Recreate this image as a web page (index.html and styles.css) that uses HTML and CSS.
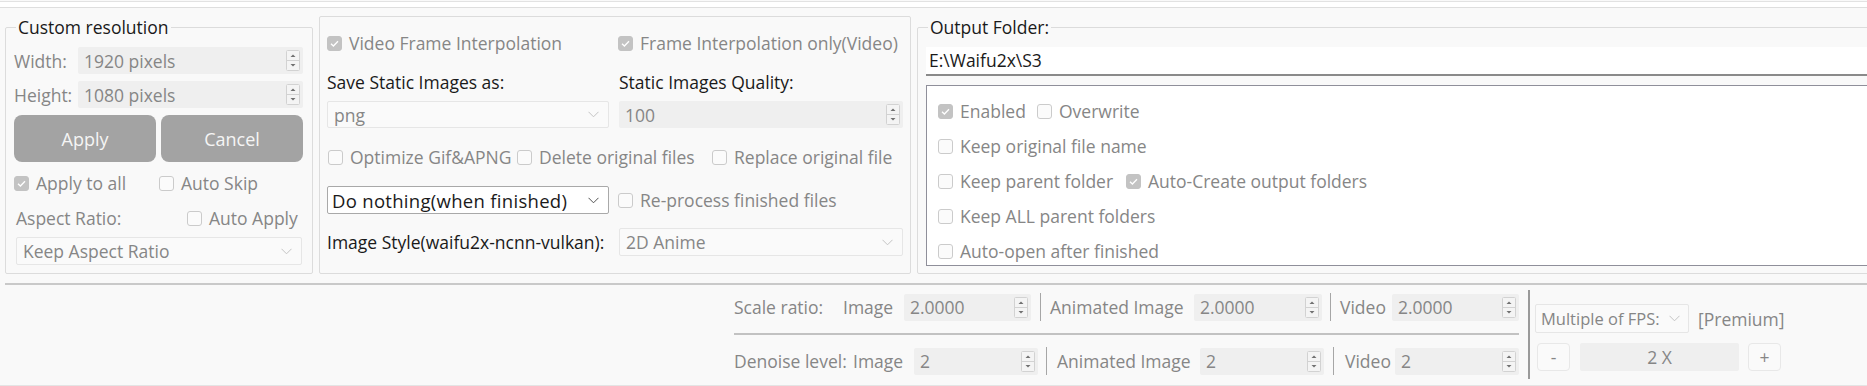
FILE: index.html
```html
<!DOCTYPE html>
<html>
<head>
<meta charset="utf-8">
<link rel="stylesheet" href="styles.css">
</head>
<body>
<div class="topbar"></div>
<div class="top-row">
  <div class="group group-res">
    <div class="group-title">Custom resolution</div>
    <div class="field-row r-width">
      <span class="lbl lbl-dim">Width:</span>
      <div class="spin spin-res"><span class="val">1920 pixels</span><svg class="arrows" width="14" height="21" viewBox="0 0 14 21"><rect x="0.5" y="0.5" width="13" height="20" rx="1" fill="#f4f4f4" stroke="#d2d2d2"/><line x1="1" y1="10.5" x2="13" y2="10.5" stroke="#d2d2d2"/><path d="M4.5 7 L7 4.5 L9.5 7 Z" fill="#707070"/><path d="M4.5 14 L7 16.5 L9.5 14 Z" fill="#707070"/></svg></div>
    </div>
    <div class="field-row r-height">
      <span class="lbl lbl-dim">Height:</span>
      <div class="spin spin-res"><span class="val">1080 pixels</span><svg class="arrows" width="14" height="21" viewBox="0 0 14 21"><rect x="0.5" y="0.5" width="13" height="20" rx="1" fill="#f4f4f4" stroke="#d2d2d2"/><line x1="1" y1="10.5" x2="13" y2="10.5" stroke="#d2d2d2"/><path d="M4.5 7 L7 4.5 L9.5 7 Z" fill="#707070"/><path d="M4.5 14 L7 16.5 L9.5 14 Z" fill="#707070"/></svg></div>
    </div>
    <div class="btn-row">
      <div class="btn-big">Apply</div>
      <div class="btn-big">Cancel</div>
    </div>
    <div class="chk-row r-apply">
      <label class="chk w-applyall"><span class="box checked"><svg width="15" height="15" viewBox="0 0 15 15"><path d="M4 7.8 L6.4 10 L11 5.2" fill="none" stroke="#ffffff" stroke-width="1.3"/></svg></span>Apply to all</label>
      <label class="chk"><span class="box"></span>Auto Skip</label>
    </div>
    <div class="chk-row r-aspect">
      <span class="lbl-dim lbl-aspect">Aspect Ratio:</span>
      <label class="chk"><span class="box"></span>Auto Apply</label>
    </div>
    <div class="combo combo-dim combo-aspect"><span>Keep Aspect Ratio</span><svg class="chev" width="11" height="7" viewBox="0 0 11 7"><path d="M0.5 0.8 L5.5 5.8 L10.5 0.8" fill="none" stroke="#c4c4c4" stroke-width="1"/></svg></div>
  </div>

  <div class="group-plain group-mid">
    <div class="mid-grid">
      <label class="chk m-r1"><span class="box checked"><svg width="15" height="15" viewBox="0 0 15 15"><path d="M4 7.8 L6.4 10 L11 5.2" fill="none" stroke="#ffffff" stroke-width="1.3"/></svg></span>Video Frame Interpolation</label>
      <label class="chk m-r1"><span class="box checked"><svg width="15" height="15" viewBox="0 0 15 15"><path d="M4 7.8 L6.4 10 L11 5.2" fill="none" stroke="#ffffff" stroke-width="1.3"/></svg></span>Frame Interpolation only(Video)</label>
      <span class="dark m-r2">Save Static Images as:</span>
      <span class="dark m-r2 col2-text">Static Images Quality:</span>
      <div class="combo combo-dim m-r3"><span>png</span><svg class="chev" width="11" height="7" viewBox="0 0 11 7"><path d="M0.5 0.8 L5.5 5.8 L10.5 0.8" fill="none" stroke="#c4c4c4" stroke-width="1"/></svg></div>
      <div class="spin m-r3 col2-field"><span class="val">100</span><svg class="arrows" width="14" height="21" viewBox="0 0 14 21"><rect x="0.5" y="0.5" width="13" height="20" rx="1" fill="#f4f4f4" stroke="#d2d2d2"/><line x1="1" y1="10.5" x2="13" y2="10.5" stroke="#d2d2d2"/><path d="M4.5 7 L7 4.5 L9.5 7 Z" fill="#707070"/><path d="M4.5 14 L7 16.5 L9.5 14 Z" fill="#707070"/></svg></div>
    </div>
    <div class="chk-row m-r4">
      <label class="chk w-optimize"><span class="box"></span>Optimize Gif&amp;APNG</label>
      <label class="chk w-delete"><span class="box"></span>Delete original files</label>
      <label class="chk"><span class="box"></span>Replace original file</label>
    </div>
    <div class="mid-grid m-r5">
      <div class="combo combo-live"><span>Do nothing(when finished)</span><svg class="chev" width="11" height="7" viewBox="0 0 11 7"><path d="M0.5 0.8 L5.5 5.8 L10.5 0.8" fill="none" stroke="#505050" stroke-width="1"/></svg></div>
      <label class="chk"><span class="box"></span>Re-process finished files</label>
    </div>
    <div class="mid-grid m-r6">
      <span class="dark">Image Style(waifu2x-ncnn-vulkan):</span>
      <div class="combo combo-dim col2-field"><span>2D Anime</span><svg class="chev" width="11" height="7" viewBox="0 0 11 7"><path d="M0.5 0.8 L5.5 5.8 L10.5 0.8" fill="none" stroke="#c4c4c4" stroke-width="1"/></svg></div>
    </div>
  </div>

  <div class="group group-out">
    <div class="group-title">Output Folder:</div>
    <div class="line-edit">E:\Waifu2x\S3</div>
    <div class="list-box">
      <div class="chk-row">
        <label class="chk w-enabled"><span class="box checked"><svg width="15" height="15" viewBox="0 0 15 15"><path d="M4 7.8 L6.4 10 L11 5.2" fill="none" stroke="#ffffff" stroke-width="1.3"/></svg></span>Enabled</label>
        <label class="chk"><span class="box"></span>Overwrite</label>
      </div>
      <div class="chk-row"><label class="chk"><span class="box"></span>Keep original file name</label></div>
      <div class="chk-row">
        <label class="chk w-parent"><span class="box"></span>Keep parent folder</label>
        <label class="chk"><span class="box checked"><svg width="15" height="15" viewBox="0 0 15 15"><path d="M4 7.8 L6.4 10 L11 5.2" fill="none" stroke="#ffffff" stroke-width="1.3"/></svg></span>Auto-Create output folders</label>
      </div>
      <div class="chk-row"><label class="chk"><span class="box"></span>Keep ALL parent folders</label></div>
      <div class="chk-row"><label class="chk"><span class="box"></span>Auto-open after finished</label></div>
    </div>
  </div>
</div>

<div class="separator"></div>

<div class="bottom">
  <div class="ratios">
    <div class="ratio-row">
      <span class="lbl-dim w-scale">Scale ratio:</span>
      <span class="lbl-dim w-img">Image</span>
      <div class="spin sp-a"><span class="val">2.0000</span><svg class="arrows" width="14" height="21" viewBox="0 0 14 21"><rect x="0.5" y="0.5" width="13" height="20" rx="1" fill="#f4f4f4" stroke="#d2d2d2"/><line x1="1" y1="10.5" x2="13" y2="10.5" stroke="#d2d2d2"/><path d="M4.5 7 L7 4.5 L9.5 7 Z" fill="#707070"/><path d="M4.5 14 L7 16.5 L9.5 14 Z" fill="#707070"/></svg></div>
      <span class="vsep"></span>
      <span class="lbl-dim w-anim">Animated Image</span>
      <div class="spin sp-b"><span class="val">2.0000</span><svg class="arrows" width="14" height="21" viewBox="0 0 14 21"><rect x="0.5" y="0.5" width="13" height="20" rx="1" fill="#f4f4f4" stroke="#d2d2d2"/><line x1="1" y1="10.5" x2="13" y2="10.5" stroke="#d2d2d2"/><path d="M4.5 7 L7 4.5 L9.5 7 Z" fill="#707070"/><path d="M4.5 14 L7 16.5 L9.5 14 Z" fill="#707070"/></svg></div>
      <span class="vsep vsep-b"></span>
      <span class="lbl-dim w-video">Video</span>
      <div class="spin sp-c"><span class="val">2.0000</span><svg class="arrows" width="14" height="21" viewBox="0 0 14 21"><rect x="0.5" y="0.5" width="13" height="20" rx="1" fill="#f4f4f4" stroke="#d2d2d2"/><line x1="1" y1="10.5" x2="13" y2="10.5" stroke="#d2d2d2"/><path d="M4.5 7 L7 4.5 L9.5 7 Z" fill="#707070"/><path d="M4.5 14 L7 16.5 L9.5 14 Z" fill="#707070"/></svg></div>
    </div>
    <div class="hline"></div>
    <div class="ratio-row r2">
      <span class="lbl-dim w-denoise">Denoise level:</span>
      <span class="lbl-dim w-img">Image</span>
      <div class="spin sp-d"><span class="val">2</span><svg class="arrows" width="14" height="21" viewBox="0 0 14 21"><rect x="0.5" y="0.5" width="13" height="20" rx="1" fill="#f4f4f4" stroke="#d2d2d2"/><line x1="1" y1="10.5" x2="13" y2="10.5" stroke="#d2d2d2"/><path d="M4.5 7 L7 4.5 L9.5 7 Z" fill="#707070"/><path d="M4.5 14 L7 16.5 L9.5 14 Z" fill="#707070"/></svg></div>
      <span class="vsep"></span>
      <span class="lbl-dim w-anim2">Animated Image</span>
      <div class="spin sp-d"><span class="val">2</span><svg class="arrows" width="14" height="21" viewBox="0 0 14 21"><rect x="0.5" y="0.5" width="13" height="20" rx="1" fill="#f4f4f4" stroke="#d2d2d2"/><line x1="1" y1="10.5" x2="13" y2="10.5" stroke="#d2d2d2"/><path d="M4.5 7 L7 4.5 L9.5 7 Z" fill="#707070"/><path d="M4.5 14 L7 16.5 L9.5 14 Z" fill="#707070"/></svg></div>
      <span class="vsep vsep-b2"></span>
      <span class="lbl-dim w-video2">Video</span>
      <div class="spin sp-d"><span class="val">2</span><svg class="arrows" width="14" height="21" viewBox="0 0 14 21"><rect x="0.5" y="0.5" width="13" height="20" rx="1" fill="#f4f4f4" stroke="#d2d2d2"/><line x1="1" y1="10.5" x2="13" y2="10.5" stroke="#d2d2d2"/><path d="M4.5 7 L7 4.5 L9.5 7 Z" fill="#707070"/><path d="M4.5 14 L7 16.5 L9.5 14 Z" fill="#707070"/></svg></div>
    </div>
  </div>
  <div class="vsep-big"></div>
  <div class="fps">
    <div class="fps-row1">
      <div class="combo combo-dim combo-fps"><span>Multiple of FPS:</span><svg class="chev" width="11" height="7" viewBox="0 0 11 7"><path d="M0.5 0.8 L5.5 5.8 L10.5 0.8" fill="none" stroke="#c4c4c4" stroke-width="1"/></svg></div>
      <span class="lbl-dim premium">[Premium]</span>
    </div>
    <div class="fps-row2">
      <div class="btn-small">-</div>
      <div class="fps-val">2 X</div>
      <div class="btn-small">+</div>
    </div>
  </div>
</div>
</body>
</html>
```

FILE: styles.css
```css
html, body {
  margin: 0;
  padding: 0;
  width: 1867px;
  height: 386px;
  overflow: hidden;
  background: #f9f9f9;
  font-family: "Open Sans", "Noto Sans", sans-serif;
  font-size: 17.5px;
  color: #868686;
}
.topbar {
  margin-top: 1px;
  height: 5px;
  border-top: 1px solid #e2e2e2;
  border-bottom: 1px solid #dedede;
  background: #ffffff;
}
.top-row {
  display: flex;
  align-items: stretch;
  margin-top: 8px;
  padding-left: 5px;
  gap: 6px;
  height: 258px;
}
.group {
  margin-top: 11px;
  border: 1px solid #dcdcdc;
  border-radius: 2px;
  box-sizing: border-box;
  padding: 0 9px 0 8px;
  display: flex;
  flex-direction: column;
}
.group-title {
  align-self: flex-start;
  margin: -12px 0 0 2px;
  padding: 0 2px;
  height: 22px;
  line-height: 22px;
  background: #f9f9f9;
  color: #1a1a1a;
}
.group-res { width: 308px; flex: none; }
.group-plain {
  border: 1px solid #dcdcdc;
  border-radius: 2px;
  box-sizing: border-box;
  padding: 0 0 0 7px;
}
.group-mid { width: 592px; flex: none; }
.group-out { width: 1000px; flex: none; padding-right: 0; }

.lbl { width: 64px; flex: none; }
.lbl-dim { color: #868686; white-space: nowrap; }
.dark { color: #1a1a1a; white-space: nowrap; line-height: 22px; }

.field-row {
  display: flex;
  align-items: center;
  height: 27px;
}
.r-width { margin-top: 9px; }
.r-height { margin-top: 7px; }

.spin {
  display: flex;
  align-items: center;
  justify-content: space-between;
  background: #efefef;
  border-radius: 2px;
  height: 27px;
  box-sizing: border-box;
  padding: 0 3px 0 6px;
  color: #868686;
}
.spin-res { flex: 1; }
.arrows { flex: none; display: block; }

.btn-row {
  display: flex;
  gap: 5px;
  margin-top: 7px;
  height: 47px;
}
.btn-big {
  flex: 1;
  background: #a3a3a3;
  border-radius: 8px;
  color: #f5f5f5;
  font-size: 18px;
  display: flex;
  align-items: center;
  justify-content: center;
}

.chk-row {
  display: flex;
  align-items: center;
  height: 22px;
}
.r-apply { margin-top: 10px; }
.r-aspect { margin-top: 13px; }
.w-applyall { width: 145px; flex: none; }
.lbl-aspect { width: 171px; margin-left: 2px; flex: none; }

.chk {
  display: flex;
  align-items: center;
  gap: 7px;
  white-space: nowrap;
  color: #868686;
  line-height: 22px;
}
.box {
  width: 15px;
  height: 15px;
  box-sizing: border-box;
  border: 1px solid #cbcbcb;
  border-radius: 3px;
  background: #fbfbfb;
  flex: none;
  display: block;
}
.box.checked {
  background: #c3c3c3;
  border-color: #c3c3c3;
}
.box svg { display: block; margin: -1px; }

.combo {
  display: flex;
  align-items: center;
  justify-content: space-between;
  box-sizing: border-box;
  height: 28px;
  border-radius: 2px;
  padding: 0 9px 0 6px;
  white-space: nowrap;
}
.combo-dim {
  border: 1px solid #e6e6e6;
  background: #fafafa;
  color: #868686;
}
.combo-live {
  border: 1px solid #a9a9a9;
  background: #ffffff;
  color: #1a1a1a;
  font-size: 18.5px;
  letter-spacing: 0.3px;
  padding-left: 4px;
}
.chev { flex: none; display: block; }
.combo-aspect { margin: 8px 1px 0 2px; }

.mid-grid {
  display: grid;
  grid-template-columns: 282px 285px;
  column-gap: 9px;
  align-items: center;
}
.m-r1 { margin-top: 15px; }
.m-r2 { margin-top: 17px; }
.m-r3 { margin-top: 8px; height: 27px; }
.col2-text { margin-left: 1px; }
.col2-field { margin-left: 1px; }
.m-r4 { margin-top: 18px; padding-left: 1px; }
.w-optimize { width: 189px; flex: none; }
.w-delete { width: 195px; flex: none; }
.m-r5 { margin-top: 18px; }
.m-r6 { margin-top: 14px; height: 28px; }

.line-edit {
  margin-top: 9px;
  height: 29px;
  box-sizing: border-box;
  background: #ffffff;
  border-bottom: 2px solid #8a8a8a;
  padding: 0 3px;
  line-height: 27px;
  color: #1a1a1a;
}
.list-box {
  margin-top: 9px;
  height: 181px;
  box-sizing: border-box;
  background: #ffffff;
  border: 1px solid #8f8f9a;
  border-right: none;
  padding: 14px 0 0 11px;
  display: flex;
  flex-direction: column;
  gap: 13px;
}
.w-enabled { width: 99px; flex: none; }
.w-parent { width: 188px; flex: none; }

.separator {
  margin: 9px 0 0 5px;
  height: 2px;
  background: #c9c9c9;
}

.bottom {
  display: flex;
  padding-left: 734px;
  height: 100px;
  border-bottom: 1px solid #e4e4e4;
}
.ratios {
  padding-top: 8px;
  display: flex;
  flex-direction: column;
}
.ratio-row {
  display: flex;
  align-items: center;
  height: 28px;
}
.r2 { margin-top: 12px; }
.hline {
  margin-top: 12px;
  height: 2px;
  background: #c2c2c2;
  width: 785px;
}
.w-scale { width: 109px; flex: none; }
.w-denoise { width: 119px; flex: none; }
.w-img { width: 61px; flex: none; }
.w-anim { width: 144px; flex: none; }
.w-anim2 { width: 143px; flex: none; }
.w-video { width: 52px; flex: none; }
.w-video2 { width: 50px; flex: none; }
.sp-a { width: 127px; flex: none; }
.sp-b { width: 128px; flex: none; }
.sp-c { width: 127px; flex: none; }
.sp-d { width: 124px; flex: none; }
.vsep {
  width: 1px;
  height: 28px;
  background: #a6a6a6;
  margin: 0 9px 0 9px;
  flex: none;
}
.vsep-b { margin: 0 9px 0 8px; }
.r2 .vsep { margin: 0 10px 0 8px; }
.r2 .vsep-b2 { margin: 0 11px 0 9px; }

.vsep-big {
  margin: 5px 0 0 9px;
  width: 2px;
  height: 89px;
  background: #9a9a9a;
}
.fps {
  margin-left: 5px;
  display: flex;
  flex-direction: column;
}
.fps-row1 {
  margin-top: 19px;
  display: flex;
  align-items: center;
  height: 29px;
}
.combo-fps { width: 154px; height: 29px; padding: 0 8px 0 5px; font-size: 16.5px; }
.premium { margin-left: 9px; }
.fps-row2 {
  margin-top: 10px;
  display: flex;
  align-items: center;
  height: 28px;
  padding-left: 2px;
  gap: 10px;
}
.btn-small {
  width: 33px;
  height: 28px;
  box-sizing: border-box;
  border: 1px solid #e8e8e8;
  border-radius: 4px;
  background: #fafafa;
  display: flex;
  align-items: center;
  justify-content: center;
  color: #868686;
}
.fps-val {
  width: 159px;
  height: 28px;
  background: #efefef;
  border-radius: 2px;
  display: flex;
  align-items: center;
  justify-content: center;
  margin-right: -1px;
}
```
